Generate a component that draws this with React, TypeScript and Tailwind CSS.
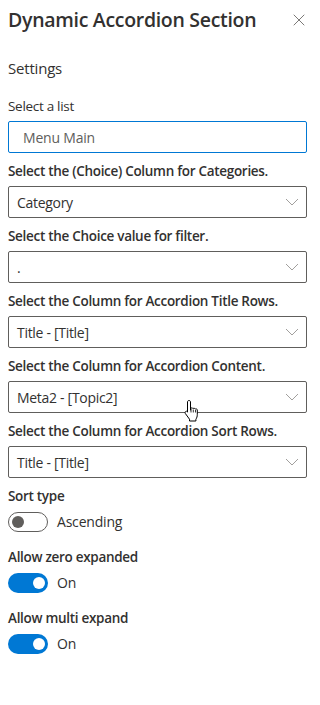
import { X } from "lucide-react";

const FONT = { fontFamily: '"Open Sans", "Noto Sans", sans-serif' };

function Label({ children, bold = true }: { children: React.ReactNode; bold?: boolean }) {
  return (
    <div
      className={`pb-[5px] pt-[5px] text-[13.5px] leading-[20px] tracking-[-0.3px] text-[#323130] ${bold ? "font-semibold" : ""}`}
    >
      {children}
    </div>
  );
}

function Chevron() {
  return (
    <svg width="14" height="8" viewBox="0 0 14 8" className="shrink-0">
      <path d="M1 1l6 6 6-6" fill="none" stroke="#a19f9d" strokeWidth="1" />
    </svg>
  );
}

function Dropdown({ value, children }: { value: string; children?: React.ReactNode }) {
  return (
    <div className="relative flex h-[32px] items-center justify-between rounded-[2px] border border-[#605e5c] pl-[8px] pr-[7px]">
      <span className="text-[14px] tracking-[-0.3px] text-[#323130]">{value}</span>
      <Chevron />
      {children}
    </div>
  );
}

function Toggle({ on, label, text }: { on: boolean; label: string; text: string }) {
  return (
    <div className="flex flex-col">
      <Label>{label}</Label>
      <div className="flex items-center gap-[9px]">
        <div
          className={`flex h-[20px] w-[40px] items-center rounded-full px-[3px] ${
            on ? "justify-end bg-[#0078d4]" : "justify-start border border-[#605e5c] bg-white"
          }`}
        >
          <div className={`h-[12px] w-[12px] rounded-full ${on ? "bg-white" : "bg-[#605e5c]"}`} />
        </div>
        <span className="text-[14px] tracking-[-0.2px] text-[#323130]">{text}</span>
      </div>
    </div>
  );
}

function HandCursor() {
  return (
    <svg
      className="pointer-events-none absolute left-[175px] top-[17px]"
      width="18"
      height="26"
      viewBox="0 0 18 26"
    >
      <path
        d="M5 1.5c.9 0 1.5.6 1.5 1.5v8.2l.3-2c.9-.6 1.8-.4 2.2.4.8-.6 1.8-.4 2.2.5.8-.5 1.8-.2 2.1.7v4.5c0 2.2-.5 3.5-1.4 5V22H5.5v-1.8L1.4 14.6c-.6-.8-.4-1.8.4-2.2.7-.4 1.5-.1 2 .5l-.3.2V3c0-.9.6-1.5 1.5-1.5z"
        fill="white"
        stroke="black"
        strokeWidth="1"
        strokeLinejoin="round"
      />
      <path d="M7 10v3.5M9.3 10.5v3M11.5 11v2.5" stroke="black" strokeWidth="0.8" />
    </svg>
  );
}

export default function App() {
  const fields = [
    { label: "Select the (Choice) Column for Categories.", value: "Category" },
    { label: "Select the Choice value for filter.", value: "." },
    { label: "Select the Column for Accordion Title Rows.", value: "Title - [Title]" },
    { label: "Select the Column for Accordion Content.", value: "Meta2 - [Topic2]", cursor: true },
    { label: "Select the Column for Accordion Sort Rows.", value: "Title - [Title]" },
  ];

  return (
    <div className="h-[705px] w-[320px] bg-white pl-[8px] pr-[13px]" style={FONT}>
      <div className="flex items-center justify-between pt-[4px]">
        <h1 className="text-[19.5px] font-semibold leading-[32px] tracking-[-0.3px] text-[#323130]">
          Dynamic Accordion Section
        </h1>
        <X className="mr-[-2px] h-[20px] w-[20px] text-[#605e5c]" strokeWidth={1} />
      </div>

      <div className="pb-[13px] pt-[22px] text-[15px] leading-[20px] tracking-[-0.2px] text-[#323130]">
        Settings
      </div>

      <Label bold={false}>Select a list</Label>
      <div className="flex h-[32px] items-center rounded-[2px] border border-[#0078d4] pl-[14px] text-[14px] tracking-[-0.2px] text-[#605e5c]">
        Menu Main
      </div>

      <div className="mt-[3px] flex flex-col gap-[3px]">
        {fields.map((f) => (
          <div key={f.label}>
            <Label>{f.label}</Label>
            <Dropdown value={f.value}>{f.cursor && <HandCursor />}</Dropdown>
          </div>
        ))}
      </div>

      <div className="mt-[3px] flex flex-col gap-[10px]">
        <Toggle on={false} label="Sort type" text="Ascending" />
        <Toggle on label="Allow zero expanded" text="On" />
        <Toggle on label="Allow multi expand" text="On" />
      </div>
    </div>
  );
}
